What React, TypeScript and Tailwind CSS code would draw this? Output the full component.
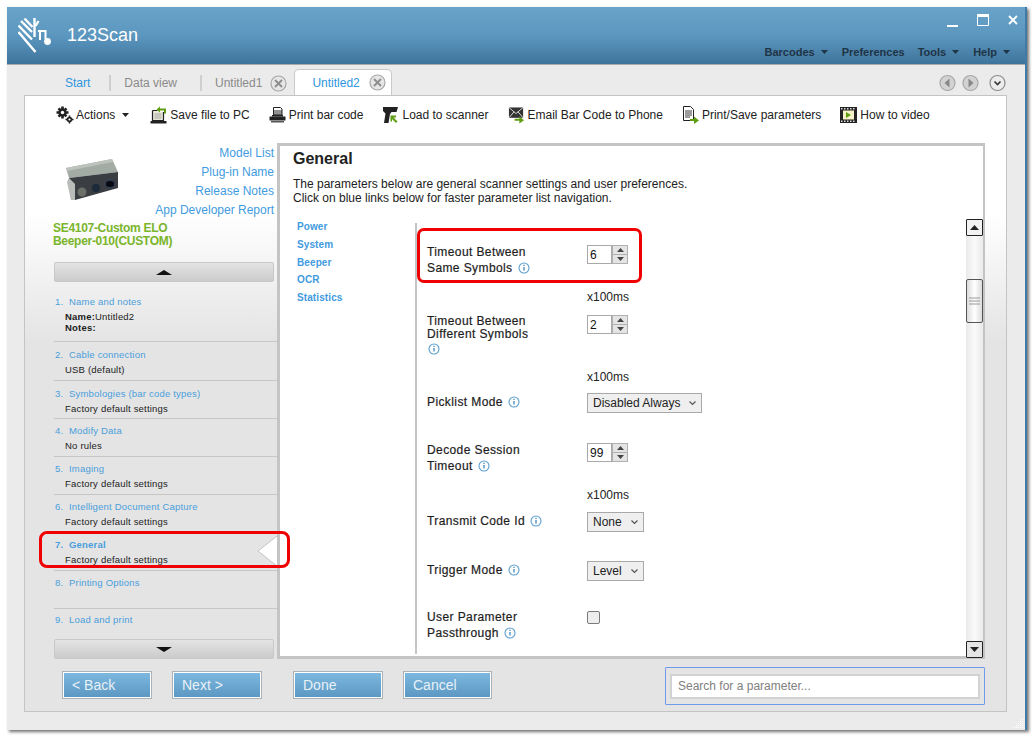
import React from "react";

const FONT = "font-['Liberation_Sans',Arial,sans-serif]";

function Logo() {
  return (
    <svg width="34" height="38" viewBox="0 0 34 38" className="shrink-0">
      <g fill="none" stroke="#fff" strokeWidth="2.400">
        <path d="M0.500 15 L17.500 35" />
        <path d="M0.500 8.500 L14 22.500" />
        <path d="M3 4 L14 15" />
        <path d="M6.500 1.500 L14.500 10" />
        <path d="M16.500 1 V20" />
        <path d="M20.500 4 L17.500 9" />
      </g>
      <g stroke="#fff" strokeWidth="2" fill="none">
        <path d="M22 14 V23" />
        <path d="M20 14 H27.500 V22" />
      </g>
      <circle cx="29.500" cy="24.500" r="3.400" fill="#fff" />
    </svg>
  );
}

function Gears() {
  return (
    <svg width="18" height="18" viewBox="0 0 18 18">
      <g fill="#222">
        <circle cx="6.500" cy="6.500" r="4.200" />
        <path d="M5.200 0.500h2.600v3H5.200zM5.200 9.500h2.600v3H5.200zM0.500 5.200h3v2.600h-3zM9.500 5.200h3v2.600h-3zM1.600 3.300l1.800-1.800 2 2-1.800 1.800zM9.600 11.300l1.800-1.800-2-2-1.800 1.800zM1.600 9.700l1.800 1.800 2-2-1.800-1.800zM11.400 3.300L9.600 1.500l-2 2 1.800 1.800z" />
        <circle cx="13.500" cy="13.500" r="2.800" />
        <path d="M12.700 9.500h1.600v2h-1.600zM12.700 15.500h1.600v2h-1.600zM9.500 12.700h2v1.600h-2zM15.500 12.700h2v1.600h-2z" />
      </g>
      <circle cx="6.500" cy="6.500" r="1.700" fill="#fff" />
      <circle cx="13.500" cy="13.500" r="1.100" fill="#fff" />
    </svg>
  );
}

function SaveIcon() {
  return (
    <svg width="17" height="18" viewBox="0 0 17 18">
      <path d="M2.500 4.500h5M2.500 4.500v10h11V6" fill="#e8e8d8" stroke="#222" strokeWidth="1.200" />
      <path d="M0.500 15h16v2.500H0.500z" fill="#222" />
      <path d="M4.500 8h7M4.500 10h7M4.500 12h7" stroke="#999" strokeWidth="0.800" />
      <path d="M16 2.500H10V0.500L6.500 3.500 10 6.500V4.500h4v3h2z" fill="#5f9e12" />
    </svg>
  );
}

function PrintIcon() {
  return (
    <svg width="17" height="16" viewBox="0 0 17 16">
      <path d="M4.500 0.500h7l1.500 1.500v6H4.500z" fill="#fff" stroke="#222" />
      <path d="M6 3v5M8 3v5M10 3v5M12 3v5" stroke="#222" strokeWidth="1" />
      <path d="M0.500 9.500h16v4H0.500z" fill="#222" />
      <path d="M3 8h11v1.500H3z" fill="#222" />
      <path d="M2 14h13v1.500H2z" fill="#555" />
    </svg>
  );
}

function ScannerIcon() {
  return (
    <svg width="17" height="18" viewBox="0 0 17 18">
      <path d="M1 1h15l-1.500 5H9.500L8 8l-1.500 9H2L3.500 7.500 1 5z" fill="#222" />
      <path d="M8.500 9.500h5.500v2h-2.500l4 4-1.500 1.500-4-4v2.500h-1.500z" fill="#5f9e12" />
    </svg>
  );
}

function MailIcon() {
  return (
    <svg width="18" height="18" viewBox="0 0 18 18">
      <path d="M1 1h15v11H1z" fill="#333" />
      <path d="M1 1l7.500 6.500L16 1M1 12l5.500-6.500M16 12l-5.500-6.500" stroke="#ddd" strokeWidth="1" fill="none" />
      <path d="M7 13h5v-2.500l5 4-5 3.500V15H7z" fill="#5f9e12" />
    </svg>
  );
}

function DocIcon() {
  return (
    <svg width="17" height="18" viewBox="0 0 17 18">
      <path d="M1.500 0.500h7l3 3v11h-10z" fill="#fff" stroke="#222" />
      <path d="M3 5h7M3 7h7M3 9h7M3 11h5" stroke="#222" strokeWidth="0.900" />
      <path d="M8 13h4v-2.500l5 4-5 3.500V15H8z" fill="#5f9e12" />
    </svg>
  );
}

function VideoIcon() {
  return (
    <svg width="17" height="16" viewBox="0 0 17 16">
      <path d="M0 0h17v16H0z" fill="#222" />
      <path d="M1 1h1.500v1.500H1zM4 1h1.500v1.500H4zM7 1h1.500v1.500H7zM10 1h1.500v1.500H10zM13 1h1.500v1.500H13zM1 13.500h1.500V15H1zM4 13.500h1.500V15H4zM7 13.500h1.500V15H7zM10 13.500h1.500V15H10zM13 13.500h1.500V15H13z" fill="#ddd" />
      <path d="M3 3.500h11v9H3z" fill="#f6f3c8" />
      <path d="M6 5l5 3-5 3z" fill="#5f9e12" />
    </svg>
  );
}

function Device() {
  return (
    <svg width="56" height="44" viewBox="0 0 56 44" className="shrink-0">
      <path d="M1 10 L47 1 L53 14 L4 20z" fill="#a3aba5" />
      <path d="M1 10 L47 1 L48 4 L2 13z" fill="#bcc3bd" />
      <path d="M4 20 L53 14 L53 30 L10 42 L6 42z" fill="#3a3d42" />
      <path d="M2 24 L4 20 L10 26 L10 42 L6 42z" fill="#b9bcb8" />
      <circle cx="17" cy="34" r="4.500" fill="#6c7068" />
      <circle cx="31" cy="30" r="4.200" fill="#1c2a3c" />
      <ellipse cx="45" cy="26" rx="4.500" ry="3.500" fill="#0a0a12" stroke="#30405e" />
    </svg>
  );
}

function CloseCircle() {
  return (
    <svg width="17" height="17" viewBox="0 0 17 17" className="shrink-0">
      <circle cx="8.500" cy="8.500" r="7.500" fill="#e6e6e6" stroke="#a8a8a8" strokeWidth="1.200" />
      <path d="M5 5l7 7M12 5l-7 7" stroke="#8e8e8e" strokeWidth="2" />
    </svg>
  );
}

function NavCircle({ dir }: { dir: "l" | "r" | "d" }) {
  return (
    <svg width="17" height="18" viewBox="0 0 17 18" className="shrink-0">
      <circle cx="8.500" cy="9" r="7.500" fill={dir === "d" ? "#ececec" : "#d2d2d2"} stroke={dir === "d" ? "#8c8c8c" : "#a8a8a8"} strokeWidth="1.200" />
      {dir === "l" && <path d="M10.500 4.500v9L5.500 9z" fill="#888" />}
      {dir === "r" && <path d="M6.500 4.500v9L11.500 9z" fill="#888" />}
      {dir === "d" && <path d="M5.500 7.500L8.500 10.500 11.500 7.500" fill="none" stroke="#333" strokeWidth="1.600" />}
    </svg>
  );
}

function Info({ className = "" }: { className?: string }) {
  return (
    <svg width="12" height="12" viewBox="0 0 12 12" className={`shrink-0 ${className}`}>
      <circle cx="6" cy="6" r="5" fill="#fff" stroke="#5a9fd0" strokeWidth="1.100" />
      <path d="M6 5v3.500" stroke="#3f87bd" strokeWidth="1.300" />
      <path d="M6 2.800v1.200" stroke="#3f87bd" strokeWidth="1.300" />
    </svg>
  );
}

function Caret({ color = "#222" }: { color?: string }) {
  return (
    <svg width="7" height="4" viewBox="0 0 7 4" className="shrink-0">
      <path d="M0 0h7L3.500 4z" fill={color} />
    </svg>
  );
}

function ToolItem({ icon, label }: { icon: React.ReactNode; label: string }) {
  return (
    <div className="flex items-center gap-[3px] whitespace-nowrap">
      <div className="flex w-[17px] justify-center">{icon}</div>
      <span>{label}</span>
    </div>
  );
}

function Step({ n, title, active, h, children }: { n: number; title: string; active?: boolean; h: string; children?: React.ReactNode }) {
  return (
    <div className={`${h} border-b border-[#c6c6c6] pl-px`}>
      <div className={`flex text-[9.500px] leading-[12px] text-[#4a9edb] tracking-[0.200px] ${active ? "font-bold" : ""}`}>
        <span className="w-[14px]">{n}.</span>
        <span>{title}</span>
      </div>
      <div className="mt-[3px] pl-[10px] text-[9.500px] leading-[11px] text-[#222] tracking-[0.200px]">{children}</div>
    </div>
  );
}

function Spinner({ value }: { value: string }) {
  return (
    <div className="flex h-[19px] w-[41px]">
      <div className="flex h-[19px] w-[25px] items-center border border-[#a9a9a9] bg-white pl-[2px] text-[12px] text-[#111]">{value}</div>
      <div className="flex w-[16px] flex-col">
        <div className="flex h-[9.500px] items-center justify-center border border-[#b0b0b0] bg-[#e4e4e4]">
          <svg width="7" height="4" viewBox="0 0 7 4"><path d="M0 4h7L3.500 0z" fill="#444" /></svg>
        </div>
        <div className="flex h-[9.500px] items-center justify-center border border-t-0 border-[#b0b0b0] bg-[#e4e4e4]">
          <svg width="7" height="4" viewBox="0 0 7 4"><path d="M0 0h7L3.500 4z" fill="#444" /></svg>
        </div>
      </div>
    </div>
  );
}

function Select({ value, w }: { value: string; w: string }) {
  return (
    <div className={`flex h-[20px] ${w} items-center justify-between border border-[#a9a9a9] bg-[#efefef] pl-[5px] pr-[5px] text-[12px] text-[#222]`}>
      <span>{value}</span>
      <svg width="7" height="5" viewBox="0 0 7 5"><path d="M0.500 0.500L3.500 3.500 6.500 0.500" fill="none" stroke="#555" strokeWidth="1.200" /></svg>
    </div>
  );
}

function Btn({ label, w }: { label: string; w: string }) {
  return (
    <div className={`flex h-[28px] ${w} items-center border border-[#aab2b8] bg-white p-px`}>
      <div className="flex h-full w-full items-center bg-gradient-to-b from-[#7cb8e0] to-[#5d98c2] pl-[8px] text-[14px] text-[#e8f1f7]">{label}</div>
    </div>
  );
}

const labelCls = "text-[12px] leading-[16px] text-[#1d1d1d] tracking-[0.400px] [-webkit-text-stroke:0.200px_#1d1d1d]";

function Row({ h, label, control }: { h: string; label: React.ReactNode; control: React.ReactNode }) {
  return (
    <div className={`flex ${h}`}>
      <div className={`w-[160px] shrink-0 ${labelCls}`}>{label}</div>
      <div>{control}</div>
    </div>
  );
}

function Unit({ children }: { children: React.ReactNode }) {
  return <div className="text-[12px] leading-[14px] text-[#222]">{children}</div>;
}

export default function App() {
  return (
    <div className={`h-[738px] w-[1035px] overflow-hidden bg-white pl-[7px] pt-[7px] ${FONT}`}>
      <div className="relative flex h-[723px] w-[1020px] flex-col bg-[#ebebeb] border-r-2 border-[#3f7ba6] shadow-[2px_2px_3px_rgba(0,0,0,0.55)]">
        {/* Title bar */}
        <header className="flex h-[58px] shrink-0 justify-between border-b border-[#a9a9a9] bg-gradient-to-b from-[#69a3c9] via-[#5c97bf] to-[#3e749c] pl-[11px] pr-[7px]">
          <div className="flex items-start pt-[10px]">
            <Logo />
            <span className="ml-[15px] mt-[6px] text-[18px] leading-[24px] text-white">123Scan</span>
          </div>
          <div className="flex flex-col items-end">
            <div className="flex h-[25px] items-start gap-[19px] pt-[8px]">
              <svg width="11" height="11" viewBox="0 0 11 11" className="mt-[1px]"><path d="M0 9h11v2H0z" fill="#fff" /></svg>
              <svg width="12" height="12" viewBox="0 0 12 12" className="-mt-[1px]"><path d="M0.500 1h11v10.500H0.500z" fill="none" stroke="#fff" /><path d="M0 0h12v3H0z" fill="#fff" /></svg>
              <svg width="10" height="10" viewBox="0 0 10 10"><path d="M1 1l8 8M9 1l-8 8" stroke="#fff" strokeWidth="1.800" /></svg>
            </div>
            <nav className="mr-[8px] mt-[13px] flex items-center text-[11px] font-bold leading-[14px] text-[#1f3445]">
              <div className="flex items-center gap-[6px]">Barcodes<Caret color="#1f3445" /></div>
              <div className="ml-[14px]">Preferences</div>
              <div className="ml-[13px] flex items-center gap-[6px]">Tools<Caret color="#1f3445" /></div>
              <div className="ml-[14px] flex items-center gap-[6px]">Help<Caret color="#1f3445" /></div>
            </nav>
          </div>
        </header>

        {/* Tabs */}
        <div className="flex h-[30px] shrink-0 justify-between pl-[58px] pr-[19px]">
          <div className="flex h-[30px] items-center pt-[6px] text-[12px] text-[#8a8a8a]">
            <span className="text-[#2f95e0]">Start</span>
            <span className="ml-[19px] h-[16px] w-[2px] bg-[#cfcfcf]" />
            <span className="ml-[13px]">Data view</span>
            <span className="ml-[23px] h-[16px] w-[2px] bg-[#cfcfcf]" />
            <span className="ml-[13px]">Untitled1</span>
            <span className="ml-[8px]"><CloseCircle /></span>
            <div className="relative z-10 ml-[7px] flex h-[26px] w-[98px] items-center self-end rounded-t-[5px] border border-b-0 border-[#c9c9c9] bg-white pl-[17px] text-[#2f95e0]">
              Untitled2
              <span className="ml-[9px]"><CloseCircle /></span>
            </div>
          </div>
          <div className="flex h-[30px] items-center gap-[6px] pt-[6px]">
            <NavCircle dir="l" />
            <NavCircle dir="r" />
            <span className="ml-[4px]"><NavCircle dir="d" /></span>
          </div>
        </div>

        {/* Main panel */}
        <div className="relative ml-[17px] flex h-[617px] w-[983px] flex-col border border-[#c4c4c4] bg-[linear-gradient(#fff_0%,#fff_19%,#e4e4e4_40%,#e4e4e4_100%)]">
          {/* Toolbar */}
          <div className="flex h-[47px] shrink-0 items-center pb-[9px] pl-[31px] text-[12px] text-[#222]">
            <div className="flex items-center gap-[2px] whitespace-nowrap">
              <Gears />
              <span>Actions</span>
              <span className="ml-[5px]"><Caret /></span>
            </div>
            <div className="ml-[21px] flex items-center gap-[19px]">
              <ToolItem icon={<SaveIcon />} label="Save file to PC" />
              <ToolItem icon={<PrintIcon />} label="Print bar code" />
              <ToolItem icon={<ScannerIcon />} label="Load to scanner" />
              <ToolItem icon={<MailIcon />} label="Email Bar Code to Phone" />
              <ToolItem icon={<DocIcon />} label="Print/Save parameters" />
              <ToolItem icon={<VideoIcon />} label="How to video" />
            </div>
          </div>

          {/* Body */}
          <div className="flex h-[516px] shrink-0">
            {/* Sidebar */}
            <aside className="relative flex w-[252px] shrink-0 flex-col pl-[29px] pr-[3px]">
              <div className="relative h-[79px] shrink-0">
                <div className="absolute left-[11px] top-[15px]"><Device /></div>
                <div className="flex flex-col items-end pt-px text-[12px] leading-[19px] text-[#3f9be0]">
                  <span>Model List</span>
                  <span>Plug-in Name</span>
                  <span>Release Notes</span>
                  <span>App Developer Report</span>
                </div>
              </div>
              <div className="-ml-[1px] h-[40px] text-[12px] font-bold leading-[13px] tracking-[-0.300px] text-[#7ab52b]">
                SE4107-Custom ELO<br />Beeper-010(CUSTOM)
              </div>
              <div className="flex h-[20px] items-center justify-center rounded-[2px] border border-[#c8c8c8] bg-gradient-to-b from-[#e4e4e4] to-[#cbcbcb]">
                <svg width="16" height="5" viewBox="0 0 16 5"><path d="M8 0 L16 5H0z" fill="#111" /></svg>
              </div>
              <div className="-mr-[3px] mt-[14px] flex flex-col gap-[6px]">
                <div className="pb-px">
                  <Step n={1} title="Name and notes" h="h-[46px]">
                    <div className="mt-[1px]"><b>Name:</b>Untitled2</div>
                    <div><b>Notes:</b></div>
                  </Step>
                </div>
                <div className="pb-px">
                  <Step n={2} title="Cable connection" h="h-[32px]">USB (default)</Step>
                </div>
                <Step n={3} title="Symbologies (bar code types)" h="h-[31px]">Factory default settings</Step>
                <Step n={4} title="Modify Data" h="h-[32px]">No rules</Step>
                <Step n={5} title="Imaging" h="h-[32px]">Factory default settings</Step>
                <Step n={6} title="Intelligent Document Capture" h="h-[32px]">Factory default settings</Step>
                <Step n={7} title="General" active h="h-[32px]">Factory default settings</Step>
                <Step n={8} title="Printing Options" h="h-[32px]" />
                <div className="-mt-px flex pl-px text-[9.500px] leading-[12px] tracking-[0.200px] text-[#4a9edb]">
                  <span className="w-[14px]">9.</span><span>Load and print</span>
                </div>
              </div>
              <div className="absolute bottom-0 left-[29px] flex h-[20px] w-[220px] items-center justify-center rounded-[2px] border border-[#c8c8c8] bg-gradient-to-b from-[#e4e4e4] to-[#cbcbcb]">
                <svg width="16" height="5" viewBox="0 0 16 5"><path d="M8 5 L16 0H0z" fill="#111" /></svg>
              </div>
              {/* pointer */}
              <svg width="20" height="30" viewBox="0 0 20 30" className="absolute right-0 top-[393px]">
                <path d="M20 0 L1 15 L20 30z" fill="#fff" />
                <path d="M20 0 L1 15 L20 30" fill="none" stroke="#c4c4c4" strokeWidth="1" />
              </svg>
            </aside>

            {/* Content */}
            <main className="flex h-full w-[708px] shrink-0 flex-col border-[3px] border-r-[2px] border-[#c4c4c4] bg-white">
              <div className="pl-[13px] pt-[3px]">
                <h1 className="text-[16px] font-bold leading-[20px] text-[#222]">General</h1>
                <p className="mt-[8px] text-[12px] leading-[14px] text-[#222]">
                  The parameters below are general scanner settings and user preferences.<br />
                  Click on blue links below for faster parameter list navigation.
                </p>
              </div>
              <div className="mt-[12px] flex min-h-0 flex-1">
                <nav className="w-[135px] shrink-0 pl-[17px] pt-[1px] text-[10px] font-bold leading-[17.750px] tracking-[0.100px] text-[#3f9be0]">
                  <div>Power</div>
                  <div>System</div>
                  <div>Beeper</div>
                  <div>OCR</div>
                  <div>Statistics</div>
                </nav>
                <div className="mb-[2px] mt-[6px] w-[2px] shrink-0 bg-[#c4c4c4]" />
                <div className="flex-1 overflow-hidden pl-[10px] pt-[28px]">
                  <Row h="h-[70px]" label={<div className="-mt-[1px]">Timeout Between<br /><span className="flex items-center gap-[5px]">Same Symbols <Info /></span></div>} control={<div><Spinner value="6" /><div className="mt-[26px]"><Unit>x100ms</Unit></div></div>} />
                  <Row h="h-[78px]" label={<div className="leading-[13px]">Timeout Between<br />Different Symbols<div className="mt-[2px] pl-[1px]"><Info /></div></div>} control={<div><Spinner value="2" /><div className="mt-[36px]"><Unit>x100ms</Unit></div></div>} />
                  <Row h="h-[50px]" label={<div className="flex items-center gap-[5px] pt-[1px]">Picklist Mode <Info /></div>} control={<Select value="Disabled Always" w="w-[115px]" />} />
                  <Row h="h-[69px]" label={<div className="-mt-[1px]">Decode Session<br /><span className="flex items-center gap-[5px]">Timeout <Info /></span></div>} control={<div><Spinner value="99" /><div className="mt-[26px]"><Unit>x100ms</Unit></div></div>} />
                  <Row h="h-[49px]" label={<div className="flex items-center gap-[5px] pt-[1px]">Transmit Code Id <Info /></div>} control={<Select value="None" w="w-[57px]" />} />
                  <Row h="h-[49px]" label={<div className="flex items-center gap-[5px] pt-[1px]">Trigger Mode <Info /></div>} control={<Select value="Level" w="w-[57px]" />} />
                  <Row h="h-[50px]" label={<div className="-mt-[1px]">User Parameter<br /><span className="flex items-center gap-[5px]">Passthrough <Info /></span></div>} control={<div className="mt-px h-[13px] w-[13px] rounded-[2px] border border-[#7a7a7a] bg-[#eeeeee]" />} />
                </div>
              </div>
              {/* scrollbar */}
              <div className="absolute bottom-[53px] right-[23px] top-[123px] flex w-[17px] flex-col justify-between bg-gradient-to-r from-[#e9e9e9] via-[#fafafa] to-[#e9e9e9]">
                <div className="flex h-[17px] items-center justify-center rounded-[1px] border border-[#222] bg-[#f2f2f2]">
                  <svg width="9" height="5" viewBox="0 0 9 5"><path d="M0 5h9L4.500 0z" fill="#222" /></svg>
                </div>
                <div className="absolute left-0 top-[60px] flex h-[44px] w-[17px] items-center justify-center rounded-[2px] border border-[#555] bg-gradient-to-r from-[#dcdcdc] via-[#ffffff] to-[#dcdcdc]">
                  <svg width="11" height="8" viewBox="0 0 11 8"><path d="M0 1h11M0 4h11M0 7h11" stroke="#9a9a9a" strokeWidth="1" /></svg>
                </div>
                <div className="flex h-[17px] items-center justify-center rounded-[1px] border border-[#222] bg-[#e4e4e4]">
                  <svg width="9" height="5" viewBox="0 0 9 5"><path d="M0 0h9L4.500 5z" fill="#222" /></svg>
                </div>
              </div>
            </main>
          </div>

          {/* Footer */}
          <div className="flex flex-1 items-start pl-[37px] pt-[8px]">
            <div className="flex pt-[4px]">
              <Btn label="< Back" w="w-[90px]" />
              <div className="ml-[20px]"><Btn label="Next >" w="w-[90px]" /></div>
              <div className="ml-[31px]"><Btn label="Done" w="w-[90px]" /></div>
              <div className="ml-[20px]"><Btn label="Cancel" w="w-[89px]" /></div>
            </div>
            <div className="ml-[173px] flex h-[38px] w-[320px] items-center rounded-[1px] border border-[#6f9bea] px-[4px]">
              <div className="flex h-[25px] w-full items-center border-2 border-[#d2d2d2] bg-white pl-[6px] text-[12px] text-[#808080]">Search for a parameter...</div>
            </div>
          </div>
        </div>

        {/* Resize grip */}
        <svg width="11" height="11" viewBox="0 0 11 11" className="absolute bottom-[1px] right-[1px]">
          <path d="M9 1h1v1H9zM9 3h1v1H9zM7 3h1v1H7zM9 5h1v1H9zM7 5h1v1H7zM5 5h1v1H5zM9 7h1v1H9zM7 7h1v1H7zM5 7h1v1H5zM3 7h1v1H3zM9 9h1v1H9zM7 9h1v1H7zM5 9h1v1H5zM3 9h1v1H3zM1 9h1v1H1z" fill="#fff" />
        </svg>

        {/* Red highlights */}
        <div className="pointer-events-none absolute left-[32px] top-[524px] h-[37px] w-[251px] rounded-[8px] border-[3px] border-[#f00000]" />
        <div className="pointer-events-none absolute left-[410px] top-[221px] h-[55px] w-[225px] rounded-[7px] border-[3px] border-[#f00000]" />
      </div>
    </div>
  );
}
